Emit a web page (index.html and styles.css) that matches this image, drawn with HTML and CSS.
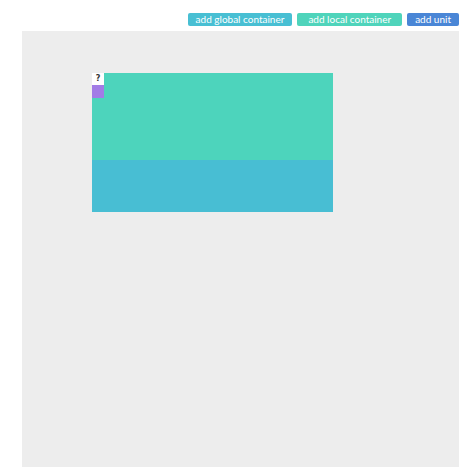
FILE: index.html
```html
<!DOCTYPE html>
<html>
<head>
<meta charset="utf-8">
<link rel="stylesheet" href="styles.css">
</head>
<body>
<div class="app">
  <div class="toolbar">
    <button class="btn btn-global">add global container</button>
    <button class="btn btn-local">add local container</button>
    <button class="btn btn-unit">add unit</button>
  </div>
  <div class="canvas">
    <div class="container-box">
      <div class="box-top"></div>
      <div class="box-bottom"></div>
      <div class="badges">
        <div class="badge-q">?</div>
        <div class="badge-purple"></div>
      </div>
    </div>
  </div>
</div>
</body>
</html>
```
FILE: styles.css
```css
html, body {
  margin: 0;
  padding: 0;
  background: #ffffff;
}
.app {
  padding: 13px 15px 0 22px;
  font-family: Lato, "Open Sans", sans-serif;
}
.toolbar {
  display: flex;
  justify-content: flex-end;
  gap: 5px;
  height: 13px;
  margin-bottom: 5px;
}
.btn {
  border: none;
  border-radius: 2px;
  color: #ffffff;
  font-family: Lato, "Open Sans", sans-serif;
  font-size: 10px;
  line-height: 13px;
  height: 13px;
  padding: 0 8px;
  margin: 0;
}
.btn-global { background: #48bfd3; }
.btn-local { background: #4fd4bb; padding: 0 11px; }
.btn-unit { background: #4a86d6; padding: 0 8px; }
.canvas {
  position: relative;
  width: 437px;
  height: 436px;
  background: #ededed;
}
.container-box {
  position: absolute;
  left: 70px;
  top: 42px;
  width: 241px;
  height: 139px;
  display: flex;
  flex-direction: column;
}
.box-top {
  height: 87px;
  background: #4dd4bc;
}
.box-bottom {
  flex: 1;
  background: #48bed3;
}
.badges {
  position: absolute;
  left: 0;
  top: 0;
  width: 12px;
  display: flex;
  flex-direction: column;
}
.badge-q {
  height: 12px;
  background: #ffffff;
  color: #333333;
  font-size: 8px;
  font-weight: bold;
  line-height: 12px;
  text-align: center;
  font-family: "DejaVu Sans", sans-serif;
}
.badge-purple {
  height: 13px;
  background: #a27ce6;
}
```
